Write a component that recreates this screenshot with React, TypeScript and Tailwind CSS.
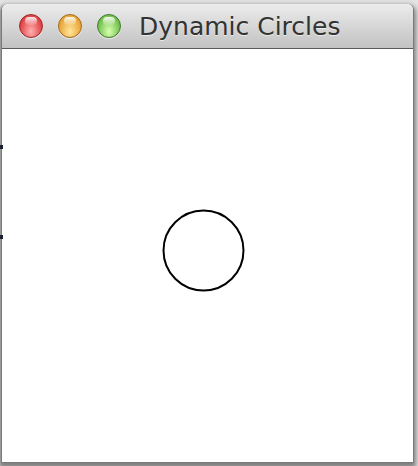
import React from 'react';

function Light({ from, to, ring }: { from: string; to: string; ring: string }) {
  return (
    <div className={`relative w-[24px] h-[24px] rounded-full border ${ring} ${from} ${to} bg-radial-[at_50%_75%] shadow-[0_1px_1px_rgba(255,255,255,0.6)]`}>
      <div className="absolute left-[5px] top-[2px] w-[12px] h-[8px] rounded-full bg-gradient-to-b from-white/90 to-white/10" />
    </div>
  );
}

export default function App() {
  return (
    <div className="w-[418px] h-[466px] bg-[#e4e4e4] pl-[1px] pt-[4px] overflow-hidden">
      <div className="relative w-[413px] h-[459px] flex flex-col rounded-t-[6px] bg-white shadow-[0_3px_5px_2px_rgba(0,0,0,0.45)] border-x border-b border-[#7a7a7a]">
        {/* title bar */}
        <div className="h-[45px] flex-shrink-0 flex items-center rounded-t-[6px] bg-gradient-to-b from-[#ececec] to-[#c2c2c2] border-b border-[#5a5a5a] pl-[17px]">
          <div className="flex items-center gap-[15px]">
            <Light from="from-[#ffb0b0]" to="to-[#d4161a]" ring="border-[#9a2a2a]" />
            <Light from="from-[#ffe69a]" to="to-[#e08a10]" ring="border-[#a06a1a]" />
            <Light from="from-[#d8ffb0]" to="to-[#4aa628]" ring="border-[#3e7a2a]" />
          </div>
          <span className="ml-[18px] mt-[1px] text-[25px] leading-none text-[#333333] font-['DejaVu_Sans',sans-serif] [text-shadow:0_1px_0_rgba(255,255,255,0.6)]">
            Dynamic Circles
          </span>
        </div>

        {/* canvas */}
        <div className="relative flex-1 bg-white">
          <span className="absolute left-[-2px] top-[96px] w-[3px] h-[4px] bg-[#1a2030]" />
          <span className="absolute left-[-2px] top-[186px] w-[3px] h-[4px] bg-[#1a2030]" />
          <svg className="absolute left-0 top-0" width="412" height="412">
            <circle cx="201.5" cy="201.5" r="40" fill="none" stroke="#000" strokeWidth="2" />
          </svg>
        </div>
      </div>
    </div>
  );
}
